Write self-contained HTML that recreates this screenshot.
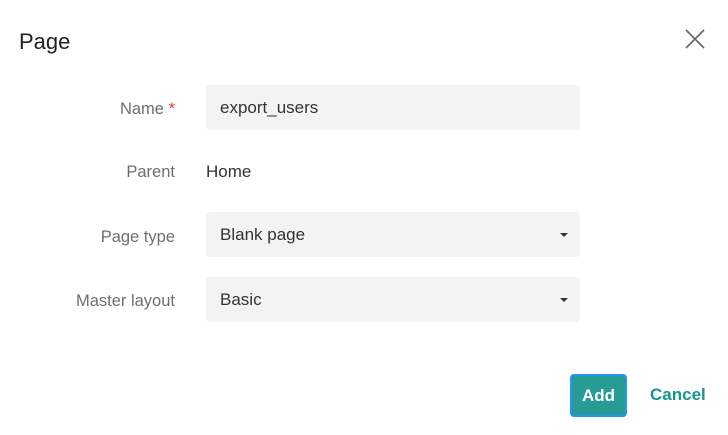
<!DOCTYPE html>
<html><head><style>
body{margin:0;width:728px;height:435px;background:#fff;font-family:"Liberation Sans",sans-serif;position:relative;overflow:hidden}
.t{position:absolute;left:19px;top:29px;font-size:22px;color:#222}
.x{position:absolute;left:685px;top:29px}
.l{position:absolute;right:553px;font-size:16.5px;color:#6f6f6f;text-align:right}
.f{position:absolute;left:206px;width:374px;height:45px;background:#f3f3f3;border-radius:4px;font-size:17px;color:#333;line-height:45px;box-sizing:border-box;padding-left:14px}
.c{position:absolute;right:12px;top:21px;width:0;height:0;border-left:4px solid transparent;border-right:4px solid transparent;border-top:4px solid #333}
</style></head><body>
<div class="t">Page</div>
<svg class="x" width="20" height="20" viewBox="0 0 20 20"><path d="M1 1L19 19M19 1L1 19" stroke="#666" stroke-width="1.6"/></svg>
<div class="l" style="top:100px">Name <span style="color:#e53935">*</span></div>
<div class="f" style="top:85px">export_users</div>
<div class="l" style="top:163px">Parent</div>
<div style="position:absolute;left:206px;top:162px;font-size:17px;color:#333">Home</div>
<div class="l" style="top:228px">Page type</div>
<div class="f" style="top:212px">Blank page<div class="c"></div></div>
<div class="l" style="top:292px">Master layout</div>
<div class="f" style="top:277px">Basic<div class="c"></div></div>
<div style="position:absolute;left:570px;top:374px;width:57px;height:43px;box-sizing:border-box;border:2px solid #2196f3;border-radius:4px;background:#279c95;color:#fff;font-weight:bold;font-size:17px;line-height:39px;text-align:center">Add</div>
<div style="position:absolute;left:650px;top:385px;color:#17958f;font-weight:bold;font-size:17px">Cancel</div>
</body></html>
